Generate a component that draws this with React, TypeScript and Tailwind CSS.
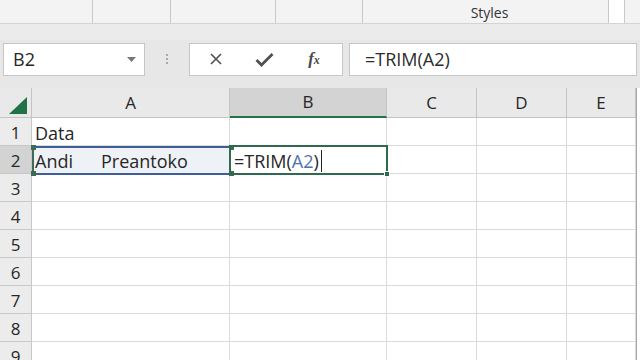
import { Fragment } from 'react';

const cols = [
  { key: 'A', width: 198 },
  { key: 'B', width: 157 },
  { key: 'C', width: 90 },
  { key: 'D', width: 90 },
  { key: 'E', width: 69 },
];

const rows = [1, 2, 3, 4, 5, 6, 7, 8, 9];

const font = { fontFamily: '"Open Sans", "Noto Sans", Arial, sans-serif' };

function Handle({ className }: { className: string }) {
  return <span className={`absolute h-[5px] w-[5px] bg-[#3d6b5a] ${className}`} />;
}

export default function App() {
  return (
    <div className="h-[360px] w-[640px] overflow-hidden bg-[#e7e7e7] text-[#262626]" style={font}>
      {/* ribbon strip */}
      <div className="flex h-[24px] bg-[#f3f3f3] border-b border-[#d4d4d4]">
        <div className="w-[93px] border-r border-[#c8c8c8]" />
        <div className="w-[78px] border-r border-[#c8c8c8]" />
        <div className="w-[105px] border-r border-[#c8c8c8]" />
        <div className="w-[87px] border-r border-[#c8c8c8]" />
        <div className="flex w-[246px] items-end justify-center border-r border-[#c8c8c8] pl-[8px] text-[14px] leading-[20px] text-[#333]">
          Styles
        </div>
        <div className="w-[16px] border-r border-[#c8c8c8] bg-white" />
        <div className="flex-1" />
      </div>
      <div className="h-[16px] bg-[#ebebeb]" />

      {/* formula bar */}
      <div className="flex h-[38px] items-center bg-[#e7e7e7]">
        <div className="ml-[3px] flex h-[33px] w-[142px] items-center justify-between border border-[#c6c6c6] bg-white pl-[9px] pr-[8px] text-[18px]">
          <span>B2</span>
          <svg width="9" height="5" viewBox="0 0 9 5">
            <path d="M0 0 L9 0 L4.5 5 Z" fill="#777" />
          </svg>
        </div>
        <div className="flex w-[44px] flex-col items-center justify-center gap-[2px]">
          <span className="h-[2px] w-[2px] bg-[#aaa]" />
          <span className="h-[2px] w-[2px] bg-[#aaa]" />
          <span className="h-[2px] w-[2px] bg-[#aaa]" />
        </div>
        <div className="flex h-[33px] w-[154px] items-center border border-[#c6c6c6] bg-white">
          <div className="flex w-[48px] justify-center pl-[3px]">
            <svg width="14" height="14" viewBox="0 0 14 14">
              <path d="M2 2 L12 12 M12 2 L2 12" stroke="#555" strokeWidth="1.7" />
            </svg>
          </div>
          <div className="flex w-[52px] justify-center">
            <svg width="19" height="15" viewBox="0 0 19 15">
              <path d="M1.5 8 L6.5 13 L17.5 2" stroke="#505050" strokeWidth="2.8" fill="none" />
            </svg>
          </div>
          <div
            className="flex w-[52px] items-baseline justify-center pr-[4px] font-bold italic text-[#4a4a4a]"
            style={{ fontFamily: '"Liberation Serif", serif' }}
          >
            <span className="text-[17px]">f</span>
            <span className="text-[12px]">x</span>
          </div>
        </div>
        <div className="ml-[6px] flex h-[33px] w-[288px] items-center border border-[#c6c6c6] bg-white pl-[15px] text-[18px] text-[#2b2b2b]">
          =TRIM(A2)
        </div>
      </div>
      <div className="h-[10px] bg-[#e7e7e7]" />

      {/* sheet */}
      <div className="relative flex">
        <div
          className="grid bg-white"
          style={{
            gridTemplateColumns: `32px ${cols.map((c) => `${c.width}px`).join(' ')}`,
            gridTemplateRows: `30px repeat(${rows.length}, 28px)`,
          }}
        >
          <div className="relative border-b border-r border-[#c4c4c4] bg-[#e9e9e9]">
            <svg className="absolute bottom-[3px] right-[4px]" width="18" height="17" viewBox="0 0 18 17">
              <path d="M18 0 L18 17 L0 17 Z" fill="#217346" />
            </svg>
          </div>
          {cols.map((c) => (
            <div
              key={c.key}
              className={`flex items-center justify-center border-r text-[17px] ${
                c.key === 'B'
                  ? 'border-b-2 border-b-[#217346] border-r-[#c4c4c4] bg-[#d3d3d3]'
                  : 'border-b border-[#c4c4c4] bg-[#e9e9e9]'
              }`}
            >
              {c.key}
            </div>
          ))}
          {rows.map((r) => (
            <Fragment key={r}>
              <div
                className={`flex items-center justify-center border-b border-r border-[#c8c8c8] pt-[2px] text-[17px] ${
                  r === 2 ? 'bg-[#d3d3d3]' : 'bg-[#ececec]'
                }`}
              >
                {r}
              </div>
              {cols.map((c) => (
                <div
                  key={c.key}
                  className={`flex items-center overflow-visible whitespace-pre border-b border-r border-[#dadada] pl-[3px] pt-[3px] text-[18px] leading-none ${
                    r === 2 && c.key === 'A' ? 'bg-[#eef2f7]' : ''
                  }`}
                >
                  {r === 1 && c.key === 'A' && 'Data'}
                  {r === 2 && c.key === 'A' && 'Andi      Preantoko'}
                  {r === 2 && c.key === 'B' && (
                    <span className="flex items-center pl-[1px]">
                      =TRIM(<span className="text-[#4f74ad]">A2</span>)
                      <span className="ml-[2px] h-[22px] w-[1px] bg-[#222]" />
                    </span>
                  )}
                </div>
              ))}
            </Fragment>
          ))}
        </div>
        <div className="flex-1 border-l border-[#a8a8a8] bg-white" />

        {/* A2 reference highlight */}
        <div className="pointer-events-none absolute left-[32px] top-[58px] h-[29px] w-[199px] border-y-2 border-y-[#3f5d96] border-l-2 border-l-[#3d6b5a]">
          <Handle className="left-[-3px] top-[-3px]" />
          <Handle className="bottom-[-3px] left-[-3px]" />
          <Handle className="right-[-3px] top-[-3px]" />
          <Handle className="bottom-[-3px] right-[-3px]" />
        </div>
        {/* B2 active cell */}
        <div className="pointer-events-none absolute left-[229px] top-[57px] h-[30px] w-[159px] border-2 border-[#2f6a4f]">
          <span className="absolute bottom-[-4px] right-[-4px] h-[6px] w-[6px] border border-white bg-[#2f6a4f]" />
        </div>
      </div>
    </div>
  );
}
